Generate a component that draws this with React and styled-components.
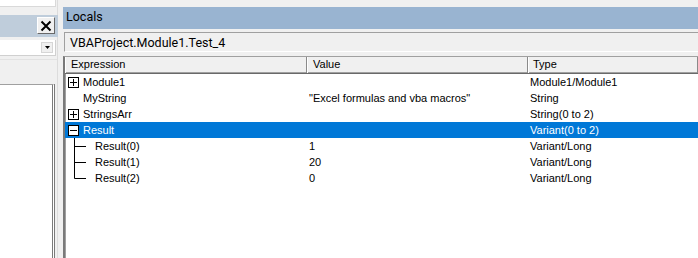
import React from 'react';
import styled, { createGlobalStyle } from 'styled-components';

const GlobalStyle = createGlobalStyle`
  html, body {
    margin: 0;
    padding: 0;
    background: #f0f0f0;
  }
  * {
    box-sizing: border-box;
  }
`;

const Window = styled.div`
  display: flex;
  width: 698px;
  height: 258px;
  overflow: hidden;
  background: #f0f0f0;
  font-family: 'Liberation Sans', Arial, sans-serif;
  font-size: 11px;
  color: #000;
`;

/* ---------- left pane (partly hidden project window) ---------- */

const LeftPane = styled.div`
  display: flex;
  flex-direction: column;
  width: 58px;
  flex: 0 0 58px;
  border-right: 1px solid #dcdcdc;
`;

const TopBox = styled.div`
  width: 56px;
  height: 7px;
  background: #fff;
  border-right: 1px solid #d9d9d9;
  border-bottom: 1px solid #d9d9d9;
`;

const TitleBand = styled.div`
  display: flex;
  align-items: flex-start;
  justify-content: flex-end;
  height: 22px;
  margin-top: 8px;
  margin-right: -1px;
  padding: 2px 3px 0 0;
  background: #bfcddb;
`;

const CloseButton = styled.div`
  display: flex;
  align-items: center;
  justify-content: center;
  width: 18px;
  height: 17px;
  background: #f0f0f0;
  border: 1px solid;
  border-color: #fff #696969 #696969 #fff;
`;

const Combo = styled.div`
  display: flex;
  align-items: center;
  justify-content: flex-end;
  width: 56px;
  height: 16px;
  margin-top: 3px;
  padding-right: 2px;
  background: #fff;
  border-right: 1px solid #d0d0d0;
  border-bottom: 1px solid #d0d0d0;
`;

const DropButton = styled.div`
  display: flex;
  align-items: flex-end;
  justify-content: center;
  width: 12px;
  height: 11px;
  padding-bottom: 3px;
  background: #f0f0f0;
  border: 1px solid #d6d6d6;
`;

const Divider = styled.div`
  height: 1px;
  margin-top: 3px;
  background: #e2e2e2;
`;

const ListBox = styled.div`
  flex: 1;
  width: 55px;
  margin-top: 24px;
  background: #fff;
  border-top: 1px solid #a0a0a0;
  border-right: 3px double #7a7a7a;
`;

/* ---------- right pane (Locals window) ---------- */

const RightPane = styled.div`
  display: flex;
  flex-direction: column;
  flex: 1;
  min-width: 0;
  margin-left: 5px;
  padding-top: 7px;
`;

const Caption = styled.div`
  height: 22px;
  padding: 1px 0 0 3px;
  line-height: 18px;
  background: #99b4d1;
  font-family: Roboto, 'Liberation Sans', sans-serif;
  font-size: 12.5px;
`;

const ContextBox = styled.div`
  height: 20px;
  margin: 3px 0 0 1px;
  padding-left: 5px;
  line-height: 19px;
  background: #f0f0f0;
  border-top: 1px solid #a0a0a0;
  border-left: 1px solid #a0a0a0;
  border-bottom: 1px solid #fff;
  font-family: Roboto, 'Liberation Sans', sans-serif;
  font-size: 12.5px;
  white-space: nowrap;
`;

const Grid = styled.div`
  flex: 1;
  margin-top: 4px;
  background: #fff;
  border-top: 1px solid #a0a0a0;
  border-left: 2px solid #7a7a7a;
  box-shadow: inset 1px 0 0 #a0a0a0;
`;

const columns = '242px 221px 1fr';

const HeaderRow = styled.div`
  display: grid;
  grid-template-columns: ${columns};
  height: 17px;
  background: #f0f0f0;
  border-bottom: 1px solid #696969;
  box-shadow: inset 0 -1px 0 #a0a0a0;
`;

const HeaderCell = styled.div`
  padding-left: ${({ $pad }) => $pad}px;
  line-height: 15px;
  border-left: 1px solid #fff;
  border-right: 1px solid #8a8a8a;
  white-space: nowrap;
`;

const Row = styled.div`
  display: grid;
  grid-template-columns: ${columns};
  height: 16px;
  line-height: 16px;
  background: ${({ $selected }) => ($selected ? '#0078d7' : 'transparent')};
  color: ${({ $selected }) => ($selected ? '#fff' : '#000')};
`;

const NameCell = styled.div`
  display: flex;
  align-items: center;
  padding-left: 3px;
  white-space: nowrap;
`;

const Cell = styled.div`
  padding-left: 2px;
  white-space: nowrap;
`;

const NodeLabel = styled.span`
  margin-left: ${({ $gap }) => $gap}px;
`;

const Spacer = styled.span`
  display: inline-block;
  width: 11px;
`;

function ExpandBox({ open }) {
  return (
    <svg width="11" height="11" viewBox="0 0 11 11" style={{ display: 'block' }}>
      <rect x="0.5" y="0.5" width="10" height="10" fill="#fff" stroke="#000" />
      <line x1="2" y1="5.5" x2="9" y2="5.5" stroke="#000" />
      {!open && <line x1="5.5" y1="2" x2="5.5" y2="9" stroke="#000" />}
    </svg>
  );
}

function Connector({ last }) {
  return (
    <svg width="27" height="16" viewBox="0 0 27 16" style={{ display: 'block' }}>
      <line x1="6.5" y1="0" x2="6.5" y2={last ? 8.5 : 16} stroke="#000" />
      <line x1="6.5" y1="8.5" x2="18" y2="8.5" stroke="#000" />
    </svg>
  );
}

const locals = [
  { name: 'Module1', value: '', type: 'Module1/Module1', node: 'closed' },
  { name: 'MyString', value: '"Excel formulas and vba macros"', type: 'String', node: 'leaf' },
  { name: 'StringsArr', value: '', type: 'String(0 to 2)', node: 'closed' },
  { name: 'Result', value: '', type: 'Variant(0 to 2)', node: 'open', selected: true },
  { name: 'Result(0)', value: '1', type: 'Variant/Long', node: 'child' },
  { name: 'Result(1)', value: '20', type: 'Variant/Long', node: 'child' },
  { name: 'Result(2)', value: '0', type: 'Variant/Long', node: 'child', last: true },
];

function Name({ item }) {
  if (item.node === 'child') {
    return (
      <NameCell>
        <Connector last={item.last} />
        <NodeLabel $gap={0}>{item.name}</NodeLabel>
      </NameCell>
    );
  }
  return (
    <NameCell>
      {item.node === 'leaf' ? <Spacer /> : <ExpandBox open={item.node === 'open'} />}
      <NodeLabel $gap={4}>{item.name}</NodeLabel>
    </NameCell>
  );
}

export default function App() {
  return (
    <>
      <GlobalStyle />
      <Window>
        <LeftPane>
          <TopBox />
          <TitleBand>
            <CloseButton>
              <svg width="12" height="12" viewBox="0 0 12 12">
                <path d="M1.5 1.5 L10.5 10.5 M10.5 1.5 L1.5 10.5" stroke="#000" strokeWidth="2" />
              </svg>
            </CloseButton>
          </TitleBand>
          <Combo>
            <DropButton>
              <svg width="5" height="3" viewBox="0 0 5 3" style={{ display: 'block' }}>
                <path d="M0 0 H5 L2.5 3 Z" fill="#000" />
              </svg>
            </DropButton>
          </Combo>
          <Divider />
          <ListBox />
        </LeftPane>

        <RightPane>
          <Caption>Locals</Caption>
          <ContextBox>VBAProject.Module1.Test_4</ContextBox>
          <Grid>
            <HeaderRow>
              <HeaderCell $pad={5}>Expression</HeaderCell>
              <HeaderCell $pad={5}>Value</HeaderCell>
              <HeaderCell $pad={4}>Type</HeaderCell>
            </HeaderRow>
            {locals.map((item) => (
              <Row key={item.name} $selected={item.selected}>
                <Name item={item} />
                <Cell>{item.value}</Cell>
                <Cell>{item.type}</Cell>
              </Row>
            ))}
          </Grid>
        </RightPane>
      </Window>
    </>
  );
}
